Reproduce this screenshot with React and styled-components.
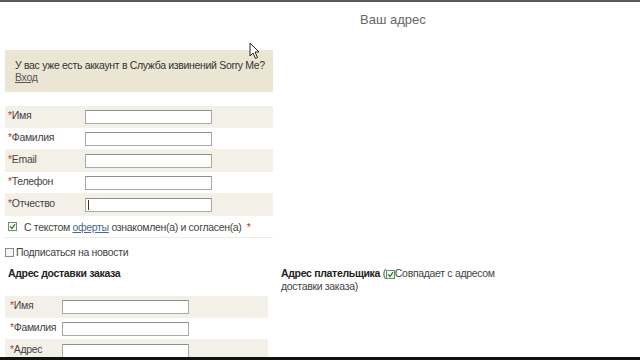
import React from "react";
import styled, { createGlobalStyle } from "styled-components";

const Global = createGlobalStyle`
  html, body { margin: 0; padding: 0; background: #fff; }
  body { font-family: "Liberation Sans", Arial, sans-serif; }
`;

const Page = styled.div`
  position: relative;
  width: 640px;
  height: 360px;
  box-sizing: border-box;
  border-top: 2px solid #5a5a5a;
  border-bottom: 3px solid #111;
  overflow: hidden;
  font-size: 10.5px;
  letter-spacing: -0.32px;
  color: #444;
`;

const Header = styled.div`
  height: 48px;
  padding-left: 360px;
  padding-top: 10px;
  box-sizing: border-box;
`;

const Title = styled.h1`
  margin: 0;
  font-size: 13px;
  font-weight: normal;
  letter-spacing: 0;
  color: #666;
`;

const LoginBox = styled.div`
  margin-left: 5px;
  width: 268px;
  height: 42px;
  box-sizing: border-box;
  padding: 9px 10px;
  background: #ebe6d4;
  color: #333;
  line-height: 12px;
  white-space: nowrap;
`;

const Link = styled.a`
  color: ${(p) => p.$color || "#555"};
  text-decoration: underline;
`;

const Form = styled.div`
  margin-left: 5px;
  margin-top: ${(p) => p.$top || 0}px;
  width: ${(p) => p.$width}px;
`;

const Row = styled.div`
  display: flex;
  align-items: center;
  height: 22px;
  box-sizing: border-box;
  background: ${(p) => (p.$shaded ? "#f3f0e7" : "#fff")};
  border-bottom: 1px solid #f4f2ec;
  padding-left: ${(p) => p.$pad}px;
`;

const Label = styled.label`
  width: ${(p) => p.$w}px;
  color: #444;
  flex-shrink: 0;
  white-space: nowrap;
  margin-top: -3px;
`;

const Star = styled.span`
  color: #c33;
`;

const Input = styled.div`
  width: 127px;
  height: 14px;
  box-sizing: border-box;
  border: 1px solid #a9a9a9;
  border-top-color: #8f8f8f;
  background: #fff;
  position: relative;
`;

const Caret = styled.span`
  position: absolute;
  left: 2px;
  top: 1px;
  width: 1px;
  height: 10px;
  background: #333;
`;

const Box = styled.span`
  display: inline-flex;
  align-items: center;
  justify-content: center;
  width: 9px;
  height: 9px;
  box-sizing: border-box;
  border: 1px solid ${(p) => (p.$checked ? "#6d8f6d" : "#8a8a8a")};
  background: ${(p) => (p.$checked ? "#f4faf2" : "#f6f6f6")};
  margin-right: ${(p) => p.$mr || 0}px;
  vertical-align: -1px;
  flex-shrink: 0;
`;

const AgreeRow = styled.div`
  display: flex;
  align-items: center;
  height: 22px;
  width: 268px;
  margin-left: 5px;
  padding-left: 3px;
  box-sizing: border-box;
  border-bottom: 1px solid #eeeae0;
  color: #444;
  white-space: nowrap;
`;

const SubscribeRow = styled.div`
  display: flex;
  align-items: center;
  margin-top: 8px;
  margin-left: 5px;
  color: #444;
`;

const Columns = styled.div`
  display: flex;
  margin-top: 9px;
`;

const LeftCol = styled.div`
  width: 276px;
  flex-shrink: 0;
`;

const RightCol = styled.div`
  width: 220px;
  padding-left: 5px;
  line-height: 13px;
  color: #444;
  white-space: nowrap;
`;

const SectionTitle = styled.div`
  font-weight: bold;
  color: #222;
  padding-left: ${(p) => p.$pad || 0}px;
  line-height: 13px;
`;

const Bold = styled.b`
  color: #222;
`;

const Cursor = styled.svg`
  position: absolute;
  left: 249px;
  top: 40px;
`;

const Check = () => (
  <svg width="7" height="7" viewBox="0 0 7 7">
    <path d="M1 3.5 L3 5.5 L6 1.2" fill="none" stroke="#2f7a2f" strokeWidth="1.3" />
  </svg>
);

const mainFields = [
  { label: "Имя" },
  { label: "Фамилия" },
  { label: "Email" },
  { label: "Телефон" },
  { label: "Отчество", caret: true },
];

const shipFields = ["Имя", "Фамилия", "Адрес"];

export default function App() {
  return (
    <>
      <Global />
      <Page>
        <Header>
          <Title>Ваш адрес</Title>
        </Header>
        <LoginBox>
          У вас уже есть аккаунт в Служба извинений Sorry Me?
          <br />
          <Link>Вход</Link>
        </LoginBox>
        <Form $top={14} $width={268}>
          {mainFields.map((f, i) => (
            <Row key={f.label} $shaded={i % 2 === 0} $pad={3}>
              <Label $w={77}>
                <Star>*</Star>
                {f.label}
              </Label>
              <Input>{f.caret && <Caret />}</Input>
            </Row>
          ))}
        </Form>
        <AgreeRow>
          <Box $checked $mr={7}>
            <Check />
          </Box>
          <span>
            С текстом <Link $color="#4a6a8a">оферты</Link> ознакомлен(а) и согласен(а)&nbsp;&nbsp;<Star>*</Star>
          </span>
        </AgreeRow>
        <SubscribeRow>
          <Box $mr={2} />
          Подписаться на новости
        </SubscribeRow>
        <Columns>
          <LeftCol>
            <SectionTitle $pad={8}>Адрес доставки заказа</SectionTitle>
            <Form $top={16} $width={263}>
              {shipFields.map((l, i) => (
                <Row key={l} $shaded={i % 2 === 0} $pad={5}>
                  <Label $w={52}>
                    <Star>*</Star>
                    {l}
                  </Label>
                  <Input />
                </Row>
              ))}
            </Form>
          </LeftCol>
          <RightCol>
            <Bold>Адрес плательщика</Bold> (
            <Box $checked>
              <Check />
            </Box>
            <span>Совпадает с адресом</span>
            <br />
            <span>доставки заказа)</span>
          </RightCol>
        </Columns>
        <Cursor width="12" height="18" viewBox="0 0 12 18">
          <path d="M1 1 L1 14 L4 11 L6.5 16.5 L8.5 15.5 L6 10 L10 10 Z" fill="#fff" stroke="#222" strokeWidth="1" />
        </Cursor>
      </Page>
    </>
  );
}
